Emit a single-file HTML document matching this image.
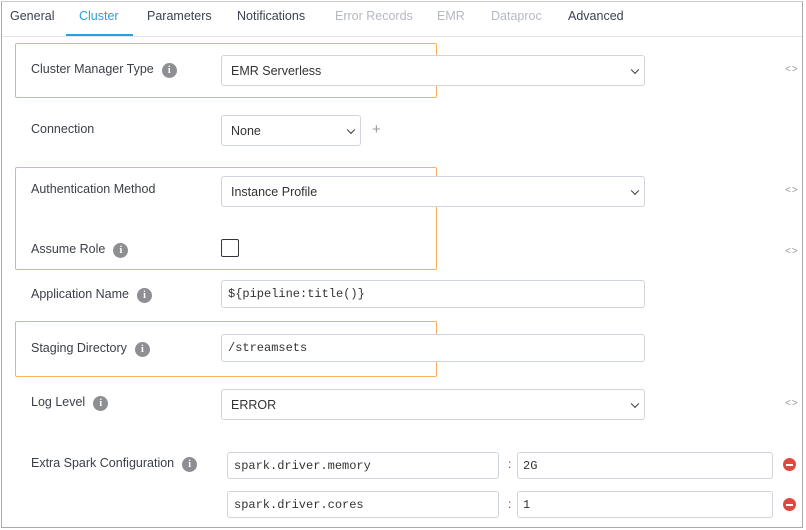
<!DOCTYPE html>
<html><head><style>
*{box-sizing:border-box;margin:0;padding:0}
body{width:806px;height:530px;background:#fff;font-family:"Liberation Sans",sans-serif;position:relative;overflow:hidden;color:#333}
.frame{position:absolute;left:1px;top:1px;width:802px;height:527px;border:1px solid #aaa;border-top-color:#ccc}
.tab{position:absolute;top:9px;font-size:12.5px;color:#3a4250}
.dis{color:#b5bac2}
.lbl{position:absolute;left:31px;font-size:12.5px;color:#3a3f48}
.info{display:inline-block;width:15px;height:15px;border-radius:50%;background:#8d8f93;color:#fff;font-size:10px;font-weight:bold;text-align:center;line-height:15px;vertical-align:0px;margin-left:8px;font-family:"Liberation Serif",serif}
.box{position:absolute;border:1px solid #cfd5dc;border-radius:3px;background:#fff;font-size:12.5px;color:#333;padding-left:9px;display:flex;align-items:center}
.mono{font-family:"Liberation Mono",monospace;font-size:12px;padding-left:6px}
.chev{position:absolute;right:6px;top:50%;width:6px;height:6px;border-right:1.6px solid #333;border-bottom:1.6px solid #333;transform:translateY(-70%) rotate(45deg)}
.org{position:absolute;border:1px solid #f5b060;border-radius:2px}
.code{position:absolute;left:785px;font-size:10px;color:#999;letter-spacing:1px}
.rm{position:absolute;left:783px;width:13px;height:13px;border-radius:50%;background:#e0483e}
.rm:after{content:"";position:absolute;left:3px;top:5.5px;width:7px;height:2px;background:#fff}
</style></head><body>
<div class="frame"></div>
<div class="tab" style="left:10px">General</div>
<div class="tab" style="left:79px;color:#2a9fd8">Cluster</div>
<div class="tab" style="left:147px">Parameters</div>
<div class="tab" style="left:237px">Notifications</div>
<div class="tab dis" style="left:335px">Error Records</div>
<div class="tab dis" style="left:437px">EMR</div>
<div class="tab dis" style="left:491px">Dataproc</div>
<div class="tab" style="left:568px">Advanced</div>
<div style="position:absolute;left:2px;top:36px;width:800px;height:1px;background:#e3e5e8"></div>
<div style="position:absolute;left:66px;top:34px;width:67px;height:2px;background:#2a9fd8"></div>

<div class="org" style="left:15px;top:43px;width:422px;height:55px"></div>
<div class="lbl" style="top:62px">Cluster Manager Type<span class="info">i</span></div>
<div class="box" style="left:221px;top:55px;width:424px;height:31px">EMR Serverless<span class="chev"></span></div>
<div class="code" style="top:64px">&lt;&gt;</div>

<div class="lbl" style="top:122px">Connection</div>
<div class="box" style="left:221px;top:115px;width:140px;height:31px">None<span class="chev"></span></div>
<div style="position:absolute;left:372px;top:121px;font-size:15px;color:#999">+</div>

<div class="org" style="left:15px;top:167px;width:422px;height:103px"></div>
<div class="lbl" style="top:182px">Authentication Method</div>
<div class="box" style="left:221px;top:176px;width:424px;height:31px">Instance Profile<span class="chev"></span></div>
<div class="code" style="top:185px">&lt;&gt;</div>
<div class="lbl" style="top:242px">Assume Role<span class="info">i</span></div>
<div style="position:absolute;left:221px;top:239px;width:18px;height:18px;border:1.5px solid #333;border-radius:2px"></div>
<div class="code" style="top:246px">&lt;&gt;</div>

<div class="lbl" style="top:287px">Application Name<span class="info">i</span></div>
<div class="box mono" style="left:221px;top:280px;width:424px;height:28px">${pipeline:title()}</div>

<div class="org" style="left:15px;top:321px;width:422px;height:56px"></div>
<div class="lbl" style="top:341px">Staging Directory<span class="info">i</span></div>
<div class="box mono" style="left:221px;top:334px;width:424px;height:28px">/streamsets</div>

<div class="lbl" style="top:395px">Log Level<span class="info">i</span></div>
<div class="box" style="left:221px;top:389px;width:424px;height:31px">ERROR<span class="chev"></span></div>
<div class="code" style="top:398px">&lt;&gt;</div>

<div class="lbl" style="top:456px">Extra Spark Configuration<span class="info">i</span></div>
<div class="box mono" style="left:227px;top:452px;width:272px;height:27px">spark.driver.memory</div>
<div style="position:absolute;left:508px;top:457px;font-size:12px;color:#555">:</div>
<div class="box mono" style="left:517px;top:452px;width:256px;height:27px;padding-left:5px">2G</div>
<div class="rm" style="top:458px"></div>
<div class="box mono" style="left:227px;top:491px;width:272px;height:27px">spark.driver.cores</div>
<div style="position:absolute;left:508px;top:497px;font-size:12px;color:#555">:</div>
<div class="box mono" style="left:517px;top:491px;width:256px;height:27px;padding-left:5px">1</div>
<div class="rm" style="top:498px"></div>
</body></html>
